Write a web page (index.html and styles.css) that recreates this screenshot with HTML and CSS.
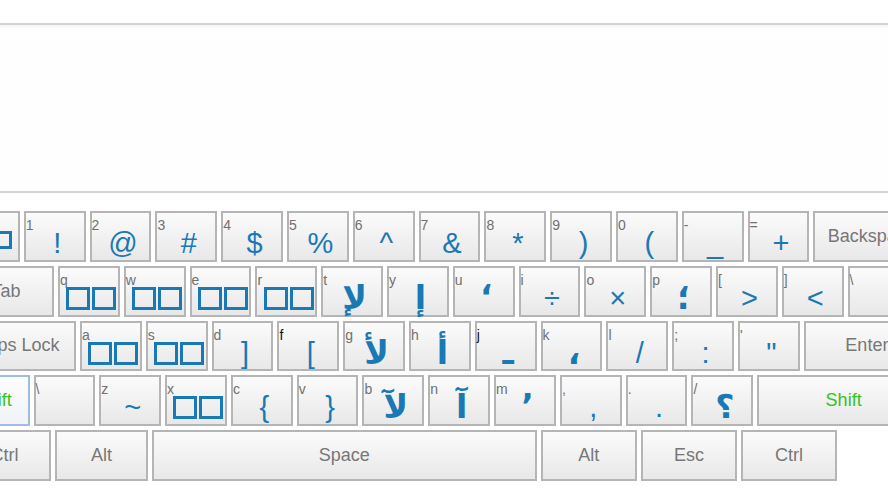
FILE: index.html
```html
<!DOCTYPE html>
<html lang="ar">
<head>
    <meta charset="UTF-8">
    <meta name="viewport" content="width=device-width, initial-scale=1.0">
    <title>Arabic Keyboard</title>
    <link rel="stylesheet" href="styles.css">
</head>
<body>
    <div class="page">
        <div class="wrap">
            <textarea class="output" dir="rtl"></textarea>

            <div class="keyboard">
                <div class="row">
                    <div class="key"><span class="lbl">`</span><span class="ch end"><i class="tofu sm"></i></span></div>
                    <div class="key"><span class="lbl">1</span><span class="ch">!</span></div>
                    <div class="key"><span class="lbl">2</span><span class="ch">@</span></div>
                    <div class="key"><span class="lbl">3</span><span class="ch">#</span></div>
                    <div class="key"><span class="lbl">4</span><span class="ch">$</span></div>
                    <div class="key"><span class="lbl">5</span><span class="ch">%</span></div>
                    <div class="key"><span class="lbl">6</span><span class="ch">^</span></div>
                    <div class="key"><span class="lbl">7</span><span class="ch">&amp;</span></div>
                    <div class="key"><span class="lbl">8</span><span class="ch">*</span></div>
                    <div class="key"><span class="lbl">9</span><span class="ch">)</span></div>
                    <div class="key"><span class="lbl">0</span><span class="ch">(</span></div>
                    <div class="key"><span class="lbl">-</span><span class="ch">_</span></div>
                    <div class="key"><span class="lbl">=</span><span class="ch">+</span></div>
                    <div class="key fn fill">Backspace</div>
                </div>

                <div class="row">
                    <div class="key fn tab">Tab</div>
                    <div class="key"><span class="lbl">q</span><span class="ch"><i class="tofu"></i><i class="tofu"></i></span></div>
                    <div class="key"><span class="lbl">w</span><span class="ch"><i class="tofu"></i><i class="tofu"></i></span></div>
                    <div class="key"><span class="lbl">e</span><span class="ch"><i class="tofu"></i><i class="tofu"></i></span></div>
                    <div class="key"><span class="lbl">r</span><span class="ch"><i class="tofu"></i><i class="tofu"></i></span></div>
                    <div class="key"><span class="lbl">t</span><span class="ch ar">لإ</span></div>
                    <div class="key"><span class="lbl">y</span><span class="ch ar">إ</span></div>
                    <div class="key"><span class="lbl">u</span><span class="ch ar">‘</span></div>
                    <div class="key"><span class="lbl">i</span><span class="ch">÷</span></div>
                    <div class="key"><span class="lbl">o</span><span class="ch">×</span></div>
                    <div class="key"><span class="lbl">p</span><span class="ch ar">؛</span></div>
                    <div class="key"><span class="lbl">[</span><span class="ch">&gt;</span></div>
                    <div class="key"><span class="lbl">]</span><span class="ch">&lt;</span></div>
                    <div class="key fill"><span class="lbl">\</span></div>
                </div>

                <div class="row">
                    <div class="key fn caps">Caps Lock</div>
                    <div class="key"><span class="lbl">a</span><span class="ch"><i class="tofu"></i><i class="tofu"></i></span></div>
                    <div class="key"><span class="lbl">s</span><span class="ch"><i class="tofu"></i><i class="tofu"></i></span></div>
                    <div class="key"><span class="lbl">d</span><span class="ch">]</span></div>
                    <div class="key"><span class="lbl dark">f</span><span class="ch">[</span></div>
                    <div class="key"><span class="lbl">g</span><span class="ch ar">لأ</span></div>
                    <div class="key"><span class="lbl">h</span><span class="ch ar">أ</span></div>
                    <div class="key"><span class="lbl dark">j</span><span class="ch ar">ـ</span></div>
                    <div class="key"><span class="lbl">k</span><span class="ch ar">،</span></div>
                    <div class="key"><span class="lbl">l</span><span class="ch">/</span></div>
                    <div class="key"><span class="lbl">;</span><span class="ch">:</span></div>
                    <div class="key"><span class="lbl">'</span><span class="ch">"</span></div>
                    <div class="key fn fill">Enter</div>
                </div>

                <div class="row">
                    <div class="key fn lshift shift focus">Shift</div>
                    <div class="key"><span class="lbl">\</span></div>
                    <div class="key"><span class="lbl">z</span><span class="ch">~</span></div>
                    <div class="key"><span class="lbl">x</span><span class="ch"><i class="tofu"></i><i class="tofu"></i></span></div>
                    <div class="key"><span class="lbl">c</span><span class="ch">{</span></div>
                    <div class="key"><span class="lbl">v</span><span class="ch">}</span></div>
                    <div class="key"><span class="lbl">b</span><span class="ch ar">لآ</span></div>
                    <div class="key"><span class="lbl">n</span><span class="ch ar">آ</span></div>
                    <div class="key"><span class="lbl">m</span><span class="ch ar">’</span></div>
                    <div class="key"><span class="lbl">,</span><span class="ch">,</span></div>
                    <div class="key"><span class="lbl">.</span><span class="ch">.</span></div>
                    <div class="key"><span class="lbl">/</span><span class="ch ar">؟</span></div>
                    <div class="key fn shift fill">Shift</div>
                </div>

                <div class="row">
                    <div class="key fn ctrl-l">Ctrl</div>
                    <div class="key fn alt-l">Alt</div>
                    <div class="key fn space">Space</div>
                    <div class="key fn alt-r">Alt</div>
                    <div class="key fn esc">Esc</div>
                    <div class="key fn ctrl-r">Ctrl</div>
                </div>
            </div>
        </div>
    </div>
</body>
</html>
```

FILE: styles.css
```css
body {
    margin: 0;
    font-family: "Liberation Sans", "DejaVu Sans", Arial, sans-serif;
    background: #fff;
    overflow: hidden;
}

.page {
    display: flex;
    justify-content: center;
    padding-top: 23px;
}

.wrap {
    flex: none;
    width: 972px;
}

.output {
    display: block;
    box-sizing: border-box;
    width: 100%;
    height: 170px;
    margin: 0;
    border: 2px solid #d3d3d3;
    background: #fefefe;
    box-shadow: inset 0 2px 3px rgba(0, 0, 0, 0.04);
    resize: none;
    outline: none;
}

.keyboard {
    display: flex;
    flex-direction: column;
    gap: 4px;
    margin-top: 18px;
}

.row {
    display: flex;
    gap: 4px;
}

.key {
    position: relative;
    box-sizing: border-box;
    flex: none;
    width: 61.8px;
    height: 50.8px;
    border: 2px solid #b5b5b5;
    background: linear-gradient(#fbfbfb, #e8e8e8);
}

.key .lbl {
    position: absolute;
    top: 4px;
    left: 0;
    font-size: 14px;
    line-height: 16px;
    color: #707070;
}

.key .lbl.dark {
    color: #111;
}

.key .ch {
    display: block;
    padding: 14px 0 0 5px;
    font-size: 29px;
    line-height: 32px;
    color: #1a78b4;
    text-align: center;
    white-space: nowrap;
}

.key .ch.end {
    padding: 14px 5px 0 0;
    text-align: right;
}

.key .ch.ar {
    font-family: "DejaVu Sans", sans-serif;
    font-size: 33px;
    font-weight: bold;
}

.tofu {
    display: inline-block;
    box-sizing: border-box;
    width: 24px;
    height: 23px;
    margin: 0 1px;
    border: 3px solid #1a78b4;
    vertical-align: -2px;
}

.tofu.sm {
    width: 20px;
    height: 18px;
    vertical-align: 4px;
}

.key.fn {
    display: flex;
    align-items: center;
    justify-content: center;
    font-size: 18px;
    color: #777;
    white-space: nowrap;
}

.key.fill {
    flex: 1 1 auto;
}

.tab { width: 96px; }
.caps { width: 118px; }
.lshift { width: 71.5px; }

.key.fn.shift {
    color: #36c31c;
}

.focus {
    border-color: #9dbde6;
    background: linear-gradient(#fdfdfe, #f1f3f6);
}

.ctrl-l { width: 93px; }
.alt-l { width: 93px; }
.space { width: 384.5px; }
.alt-r { width: 96.5px; }
.esc { width: 96px; }
.ctrl-r { width: 96px; }
```
